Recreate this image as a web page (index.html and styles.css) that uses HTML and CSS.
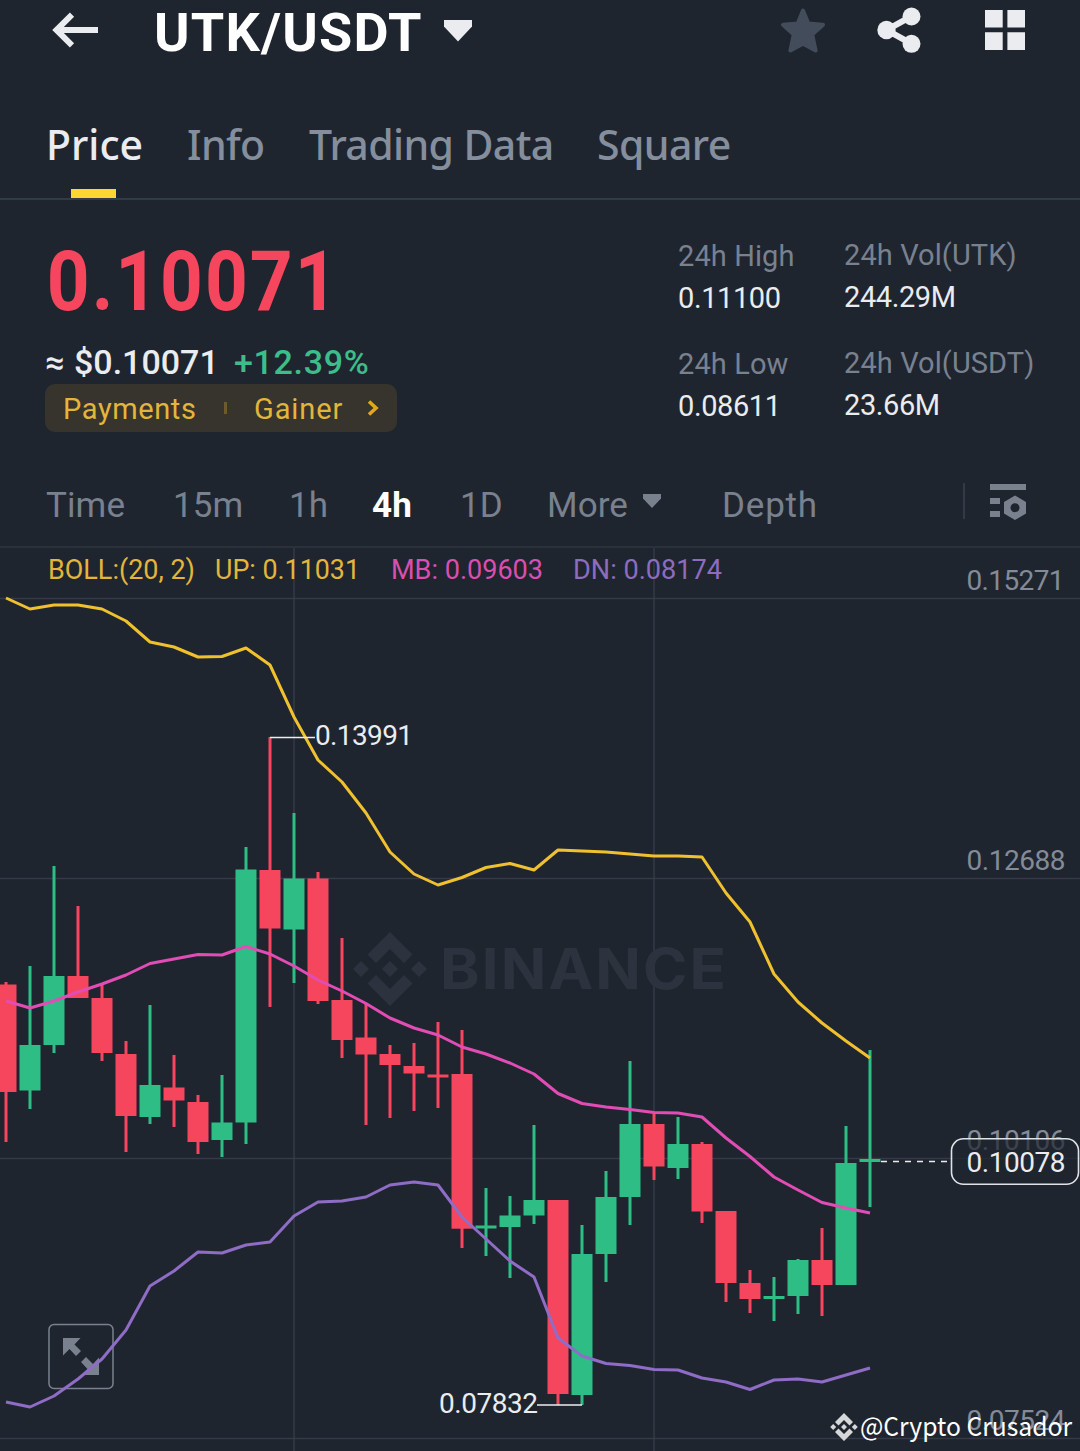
FILE: index.html
```html
<!DOCTYPE html>
<html lang="en">

<head>
    <meta charset="UTF-8">
    <meta name="viewport" content="width=device-width, initial-scale=1.0">
    <title>UTK/USDT</title>
    <link rel="stylesheet" href="styles.css">
</head>

<body>
    <header class="topbar">
        <svg class="icon-back" width="46" height="36" viewBox="0 0 46 36">
            <path d="M46 18H5M20 2.700L4.500 18L20 33.300" fill="none" stroke="#eaecef" stroke-width="6" />
        </svg>
        <h1 class="pair">UTK/USDT</h1>
        <svg class="icon-caret" width="28" height="22" viewBox="0 0 28 22">
            <path d="M0 0H28V6.500L14 21.500L0 6.500Z" fill="#eaecef" />
        </svg>
        <div class="actions">
            <svg width="46" height="46" viewBox="0 0 46 46">
                <path d="M23 3.500L28.300 16.500L43 17.800L32.200 27.500L35.600 43.500L23 36.800L10.400 43.500L13.800 27.500L3 17.800L17.700 16.500Z" fill="#434c5a" stroke="#434c5a" stroke-width="4" stroke-linejoin="round" />
            </svg>
            <svg width="44" height="46" viewBox="0 0 44 46">
                <path d="M35 9L9.500 23L35 37" fill="none" stroke="#eaecef" stroke-width="6" />
                <circle cx="9.500" cy="23" r="9.200" fill="#eaecef" />
                <circle cx="34.500" cy="9.500" r="9" fill="#eaecef" />
                <circle cx="34.500" cy="36.800" r="9" fill="#eaecef" />
            </svg>
            <svg width="40" height="40" viewBox="0 0 40 40">
                <path d="M0 0H17.700V17.500H0ZM22.400 0H40V17.500H22.400ZM0 22.200H17.700V40H0ZM22.400 22.200H40V40H22.400Z" fill="#eaecef" />
            </svg>
        </div>
    </header>

    <nav class="tabs">
        <a class="tab active">Price</a>
        <a class="tab">Info</a>
        <a class="tab">Trading Data</a>
        <a class="tab">Square</a>
    </nav>

    <section class="summary">
        <div class="price-box">
            <div class="last-price">0.10071</div>
            <div class="sub-price">
                <span class="approx">≈</span>
                <span class="fiat">$0.10071</span>
                <span class="change">+12.39%</span>
            </div>
            <div class="tags">
                <span class="tag-pay">Payments</span>
                <span class="tag-sep"></span>
                <span class="tag-gain">Gainer</span>
                <svg width="12" height="16" viewBox="0 0 12 16">
                    <path d="M2 1.500L9 8L2 14.500" fill="none" stroke="#e0a91b" stroke-width="3.600" />
                </svg>
            </div>
        </div>
        <div class="stats">
            <div class="stat-col">
                <div class="stat">
                    <div class="label">24h High</div>
                    <div class="value">0.11100</div>
                </div>
                <div class="stat">
                    <div class="label">24h Low</div>
                    <div class="value">0.08611</div>
                </div>
            </div>
            <div class="stat-col vol">
                <div class="stat">
                    <div class="label">24h Vol(UTK)</div>
                    <div class="value">244.29M</div>
                </div>
                <div class="stat">
                    <div class="label">24h Vol(USDT)</div>
                    <div class="value">23.66M</div>
                </div>
            </div>
        </div>
    </section>

    <nav class="intervals">
        <a>Time</a>
        <a>15m</a>
        <a>1h</a>
        <a class="active">4h</a>
        <a>1D</a>
        <a>More
            <svg class="more-caret" width="18" height="14" viewBox="0 0 18 14">
                <path d="M0 0H18V4.500L9 14L0 4.500Z" fill="#79818f" />
            </svg>
        </a>
        <a class="depth">Depth</a>
        <span class="divider"></span>
        <svg width="36" height="36" viewBox="0 0 36 36">
            <path d="M0 0H36V6H0ZM0 14H10V20H0ZM0 27H10V33H0Z" fill="#79818f" />
            <path fill-rule="evenodd" d="M25 11.500L36 18V29.500L25 36L14 29.500V18ZM25 19.200A4.500 4.500 0 1 0 25 28.200A4.500 4.500 0 1 0 25 19.200Z" fill="#79818f" />
        </svg>
    </nav>

    <svg class="chart" width="1080" height="903" viewBox="0 548 1080 903">
        <g class="grid">
            <path d="M0 598.500H1080M0 878.500H1080M0 1158.500H1080M0 1438.500H1080M294 548V1451M654 548V1451" />
        </g>

        <!-- watermark -->
        <g class="watermark">
            <path d="M390 932L412.500 954.500L404 963L390 949L376 963L367.500 954.500ZM390 1006L412.500 983.500L404 975L390 989L376 975L367.500 983.500ZM390 961L398 969L390 977L382 969ZM361 961L369 969L361 977L353 969ZM419 961L427 969L419 977L411 969Z" />
            <text x="440" y="989" textLength="288" lengthAdjust="spacingAndGlyphs">BINANCE</text>
        </g>

        <g class="axis">
            <text x="966.500" y="590" textLength="98">0.15271</text>
            <text x="966.500" y="870" textLength="99">0.12688</text>
            <text x="966.500" y="1150" textLength="99">0.10106</text>
            <text x="966.500" y="1430" textLength="99">0.07524</text>
        </g>

        <!-- full screen button -->
        <g class="expand">
            <rect x="49" y="1324.500" width="64" height="64" rx="5" />
            <path d="M63 1338H80.500L74.500 1344.500L81 1351L76 1356L69.500 1349L63 1355.500ZM99 1375H81.500L87.500 1369L81 1362L86 1357L93 1364L99 1357.500Z" />
        </g>

        <g id="candles"></g>
        <g id="lines"></g>

        <g class="legend">
            <text class="up" x="48" y="579" textLength="147" lengthAdjust="spacingAndGlyphs">BOLL:(20, 2)</text>
            <text class="up" x="215" y="579" textLength="145" lengthAdjust="spacingAndGlyphs">UP: 0.11031</text>
            <text class="mb" x="391" y="579" textLength="152" lengthAdjust="spacingAndGlyphs">MB: 0.09603</text>
            <text class="dn" x="573" y="579" textLength="149" lengthAdjust="spacingAndGlyphs">DN: 0.08174</text>
        </g>

        <g class="marks">
            <path d="M270 737.500H315M537 1405H582" />
            <text x="315" y="745" textLength="98">0.13991</text>
            <text x="439" y="1413" textLength="99">0.07832</text>
        </g>

        <!-- current price -->
        <g class="current">
            <path d="M881 1161.500H949" stroke-dasharray="6 6" />
            <rect x="951.500" y="1138.800" width="127" height="45.500" rx="12" />
            <text x="966.500" y="1172" textLength="99">0.10078</text>
        </g>

        <g class="author">
            <path d="M844 1413L853 1422L849.500 1425.500L844 1420L838.500 1425.500L835 1422ZM844 1441L853 1432L849.500 1428.500L844 1434L838.500 1428.500L835 1432ZM844 1424L847 1427L844 1430L841 1427ZM833.200 1424L836.200 1427L833.200 1430L830.200 1427ZM854.800 1424L857.800 1427L854.800 1430L851.800 1427Z" />
            <text x="860" y="1436" textLength="212" lengthAdjust="spacingAndGlyphs">@Crypto Crusador</text>
        </g>
    </svg>

    <script>
        const STEP = 24;
        const START = 6;

        // type, high, body top, body bottom, low
        const candles = [
            ['down', 982, 984.5, 1092, 1142],
            ['up', 966, 1045, 1090.5, 1109],
            ['up', 866, 976, 1045, 1053],
            ['down', 906, 976, 998, 998],
            ['down', 984, 998, 1053, 1061],
            ['down', 1041, 1054, 1116, 1152],
            ['up', 1005, 1085, 1117, 1124],
            ['down', 1055, 1087.5, 1100.5, 1127],
            ['down', 1095, 1102, 1142, 1154],
            ['up', 1075, 1122.5, 1140, 1157],
            ['up', 847, 869.5, 1122.5, 1144],
            ['down', 737, 870, 928.5, 1007],
            ['up', 813, 878.5, 929.5, 983],
            ['down', 872, 878.5, 1001, 1004],
            ['down', 938, 1000, 1040, 1058],
            ['down', 1004, 1037.5, 1054.5, 1125],
            ['down', 1045, 1054, 1065, 1118],
            ['down', 1043, 1066, 1073.5, 1111],
            ['down', 1022, 1074.5, 1077.5, 1108],
            ['down', 1030, 1074, 1228.7, 1248],
            ['up', 1188, 1225.5, 1228.5, 1256],
            ['up', 1196, 1215.5, 1227, 1278],
            ['up', 1125, 1200, 1215.5, 1224],
            ['down', 1200, 1200, 1394, 1405],
            ['up', 1225, 1254, 1395, 1405],
            ['up', 1171, 1197, 1254, 1282],
            ['up', 1061, 1124, 1197, 1225],
            ['down', 1112, 1124, 1166.5, 1180],
            ['up', 1117, 1144, 1168, 1179],
            ['down', 1142, 1144, 1211.5, 1223],
            ['down', 1211, 1211, 1283, 1302],
            ['down', 1270, 1283, 1299, 1313],
            ['up', 1277, 1296, 1299, 1321],
            ['up', 1259, 1260, 1296, 1314],
            ['down', 1228, 1260, 1285, 1316],
            ['up', 1126, 1163, 1285, 1285],
            ['up', 1050, 1159, 1162, 1207]
        ];

        const lines = {
            up: [598, 609, 605, 605, 609, 621, 642, 647, 657, 656.5, 648, 665, 717, 760, 782, 813, 852, 874, 885, 877.5, 867.5, 863.5, 870, 850, 851, 852, 854, 856, 856, 857, 893, 922, 974, 1002, 1023, 1041, 1058],
            mb: [1001, 1008, 1001, 992, 984, 975, 963.5, 959, 954.5, 955, 946.5, 954, 966, 980, 991, 1003.5, 1018, 1028, 1035, 1047, 1054, 1063, 1074, 1093.5, 1103.5, 1107, 1109.5, 1112.5, 1113, 1117, 1138, 1156.5, 1177, 1190, 1202.5, 1208, 1213],
            dn: [1402, 1407, 1396, 1379, 1359, 1330, 1286, 1271, 1252, 1253, 1245, 1242, 1216, 1202, 1201, 1197, 1185, 1182, 1185, 1217, 1239, 1261, 1277, 1338, 1356, 1363.5, 1365.5, 1369.5, 1370, 1378, 1382, 1389.5, 1380, 1379, 1382, 1375, 1368]
        };

        document.getElementById('candles').innerHTML = candles.map((c, i) => {
            const [type, high, top, bottom, low] = c;
            const x = START + i * STEP;
            return `<g class="${type}">
                <rect x="${x - 1.5}" y="${high}" width="3" height="${low - high}" />
                <rect x="${x - 10.5}" y="${top}" width="21" height="${bottom - top}" />
            </g>`;
        }).join('');

        document.getElementById('lines').innerHTML = Object.keys(lines).map(name => {
            const points = lines[name].map((y, i) => `${START + i * STEP},${y}`).join(' ');
            return `<polyline class="line-${name}" points="${points}" />`;
        }).join('');
    </script>
</body>

</html>
```
FILE: styles.css
```css
* {
    box-sizing: border-box;
}

body {
    margin: 0;
    width: 1080px;
    height: 1451px;
    overflow: hidden;
    background-color: #1f252f;
    color: #eaecef;
    font-family: Roboto, "Liberation Sans", sans-serif;
}

svg {
    display: block;
    flex-shrink: 0;
}

.topbar {
    display: flex;
    align-items: center;
    height: 60px;
    padding: 0 55px 0 52px;
}

.icon-caret {
    margin-top: 2px;
}

.pair {
    margin: 0 0 0 56px;
    width: 290px;
    font-size: 54px;
    line-height: 64px;
    font-weight: 700;
    color: #fff;
    letter-spacing: 1.2px;
    white-space: nowrap;
    padding-top: 6px;
}

.actions {
    display: flex;
    align-items: center;
    margin-left: auto;
}

.actions svg + svg {
    margin-left: 51px;
}

.actions svg + svg + svg {
    margin-left: 64px;
}

/* tabs */
.tabs {
    display: grid;
    grid-template-columns: 141px 122px 288px 200px;
    height: 140px;
    padding: 59px 0 0 46px;
    border-bottom: 2px solid #323a45;
}

.tab {
    height: 79px;
    font-family: "Noto Sans", sans-serif;
    font-size: 41px;
    line-height: 50px;
    font-weight: 500;
    color: #848e9c;
    letter-spacing: -0.6px;
    white-space: nowrap;
}

.tab.active {
    color: #eaecef;
    letter-spacing: 0;
}

.tab.active::after {
    content: "";
    display: block;
    width: 45px;
    height: 9px;
    margin: 20px 0 0 25px;
    background-color: #fcd535;
}

/* price */
.summary {
    display: flex;
    height: 260px;
    padding: 33px 0 0 45px;
}

.price-box {
    width: 633px;
}

.last-price {
    height: 96px;
    padding-left: 2px;
    font-size: 83px;
    line-height: 98px;
    font-weight: 700;
    color: #f6465d;
    letter-spacing: 2.2px;
    transform: scaleX(0.9);
    transform-origin: 0 0;
}

.sub-price {
    display: flex;
    height: 55px;
    padding-top: 13px;
    font-size: 34px;
    line-height: 40px;
    font-weight: 500;
}

.approx {
    width: 29px;
}

.fiat {
    width: 160px;
}

.change {
    color: #3dbd8a;
    letter-spacing: 0.7px;
}

.tags {
    display: flex;
    align-items: center;
    width: 352px;
    height: 48px;
    padding-left: 18px;
    border-radius: 10px;
    background-color: #36342c;
    color: #e3b53b;
    font-size: 29px;
    letter-spacing: 0.6px;
}

.tag-pay {
    width: 161px;
    padding-top: 2px;
}

.tag-sep {
    width: 3px;
    height: 12px;
    background-color: #6e5a2a;
}

.tag-gain {
    width: 113px;
    margin-left: 27px;
    padding-top: 2px;
    letter-spacing: 0.9px;
}

.stats {
    display: flex;
}

.stat-col {
    width: 166px;
    padding-top: 2px;
}

.stat-col.vol {
    width: 220px;
    padding-top: 1px;
}

.stat {
    height: 108px;
    font-size: 29px;
    line-height: 42px;
    white-space: nowrap;
}

.label {
    color: #79818f;
    letter-spacing: 0.1px;
}

.value {
    letter-spacing: -0.4px;
}

/* intervals */
.intervals {
    display: grid;
    grid-template-columns: 127px 116px 83px 88px 87px 175px 241px 27px 36px;
    height: 86px;
    padding: 22px 0 0 46px;
    font-size: 35px;
    line-height: 47px;
    color: #79818f;
    letter-spacing: 0.1px;
}

.intervals a {
    display: flex;
    white-space: nowrap;
}

.intervals .active {
    font-weight: 700;
    color: #fff;
}

.intervals .depth {
    letter-spacing: 0.8px;
}

.more-caret {
    margin: 12px 0 0 15px;
}

.divider {
    width: 2px;
    height: 36px;
    margin-top: 1px;
    background-color: #323a45;
}

.intervals > svg {
    margin-top: 2px;
}

/* chart */
.chart {
    box-sizing: content-box;
    border-top: 2px solid #2b313c;
    font-size: 28px;
}

.grid path {
    fill: none;
    stroke: #343b47;
    stroke-width: 1.5;
}

.watermark {
    fill: #2d333e;
    font-family: Inter, sans-serif;
    font-size: 56px;
    font-weight: 700;
    letter-spacing: 2px;
}

.axis {
    fill: #848b98;
}

.expand rect {
    fill: none;
    stroke: #79818f;
    stroke-width: 1.5;
}

.expand path {
    fill: #79818f;
}

.up {
    fill: #2ebd85;
}

.down {
    fill: #f6465d;
}

#lines polyline {
    fill: none;
    stroke-width: 3;
    stroke-linejoin: round;
}

.line-up {
    stroke: #f0c02e;
}

.line-mb {
    stroke: #e14db4;
}

.line-dn {
    stroke: #8f6cc6;
}

.legend .up {
    fill: #e3b53b;
}

.legend .mb {
    fill: #d94fb0;
}

.legend .dn {
    fill: #8d6cc0;
}

.marks {
    fill: #eaecef;
}

.marks path {
    fill: none;
    stroke: #eaecef;
    stroke-width: 1.5;
}

.current {
    fill: #eaecef;
}

.current path {
    stroke: #eaecef;
    stroke-width: 1.5;
}

.current rect {
    fill: rgba(31, 37, 47, 0.7);
    stroke: #dfe2e6;
    stroke-width: 1.6;
}

.author {
    fill: #fff;
    font-family: "Noto Sans CJK SC", sans-serif;
    font-size: 26px;
    font-weight: 400;
}

.author path {
    fill: #d6d7d9;
}
```
